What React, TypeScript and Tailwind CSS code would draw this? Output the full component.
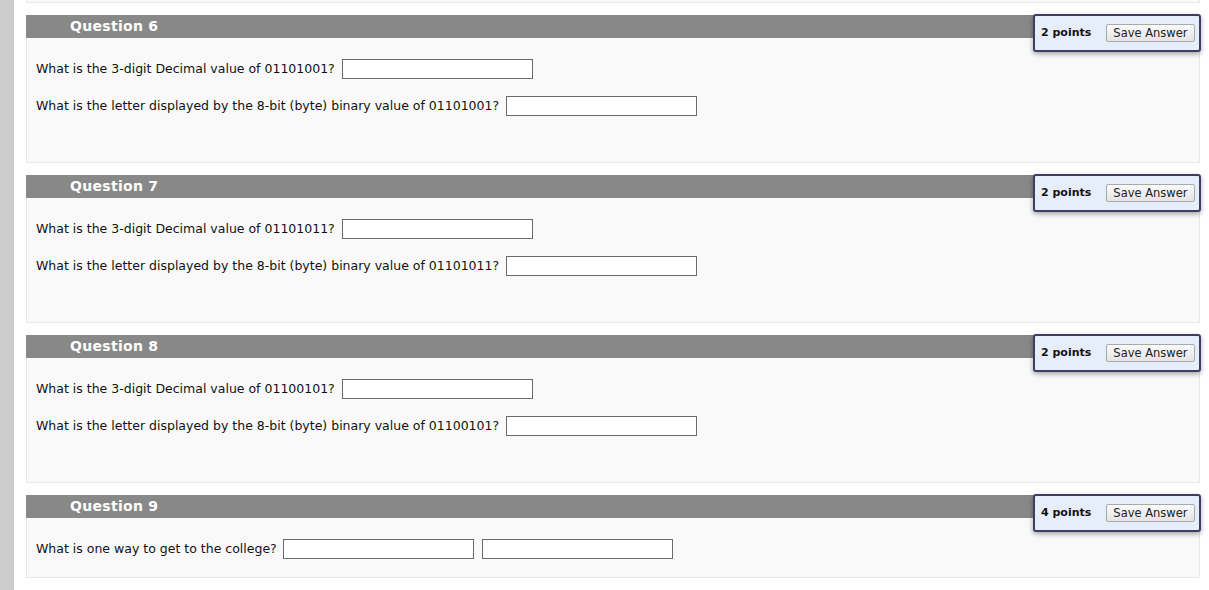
const QUESTIONS = [
    {
        num: 6,
        points: 2,
        rows: [
            "What is the 3-digit Decimal value of 01101001?",
            "What is the letter displayed by the 8-bit (byte) binary value of 01101001?",
        ],
    },
    {
        num: 7,
        points: 2,
        rows: [
            "What is the 3-digit Decimal value of 01101011?",
            "What is the letter displayed by the 8-bit (byte) binary value of 01101011?",
        ],
    },
    {
        num: 8,
        points: 2,
        rows: [
            "What is the 3-digit Decimal value of 01100101?",
            "What is the letter displayed by the 8-bit (byte) binary value of 01100101?",
        ],
    },
];

function PointsBox({ points }: { points: number }) {
    return (
        <div className="absolute right-[-1px] top-[-1px] flex h-[38px] w-[168px] items-center whitespace-nowrap rounded-[3px] border-2 border-[#3d3d66] bg-[#e6eefc] pl-[6px] shadow-[0_2px_5px_rgba(0,0,0,0.35)]">
            <span className="text-[11px] font-bold text-[#111]">{points} points</span>
            <button className="ml-[15px] h-[18px] rounded-[2px] border border-[#aaaaaa] bg-gradient-to-b from-[#fbfbfb] to-[#e4e4e4] px-[6px] text-[11.5px] leading-[16px] text-[#222]">
                Save Answer
            </button>
        </div>
    );
}

function Field() {
    return <input className="h-[20px] w-[191px] shrink-0 border border-[#6b6b6b] bg-white" />;
}

function QuestionCard({
    num,
    points,
    bodyClass,
    children,
}: {
    num: number;
    points: number;
    bodyClass: string;
    children: React.ReactNode;
}) {
    return (
        <div className="relative">
            <div className="h-[23px] bg-[#888888] pl-[44px] text-[14px] font-bold leading-[23px] tracking-[0.3px] text-white">
                Question {num}
            </div>
            <div className={`border-x border-b border-[#e8e8e8] bg-[#f9f9f9] pl-[9px] ${bodyClass}`}>{children}</div>
            <PointsBox points={points} />
        </div>
    );
}

export default function App() {
    return (
        <div
            className="flex h-[590px] w-[1209px] overflow-hidden bg-white text-[12.5px] text-[#111]"
            style={{ fontFamily: '"DejaVu Sans", Verdana, sans-serif' }}
        >
            <div className="w-[14px] shrink-0 bg-[#cccccc]" />
            <div className="ml-[12px] mr-[9px] flex flex-1 flex-col gap-[12px]">
                {/* tail of the previous card */}
                <div className="h-[3px] border-x border-b border-[#e8e8e8] bg-[#f9f9f9]" />

                {QUESTIONS.map((q) => (
                    <QuestionCard key={q.num} num={q.num} points={q.points} bodyClass="h-[125px] pt-[21px]">
                        <div className="flex flex-col gap-[17px]">
                            {q.rows.map((r) => (
                                <div key={r} className="flex items-center gap-[7px]">
                                    <span>{r}</span>
                                    <Field />
                                </div>
                            ))}
                        </div>
                    </QuestionCard>
                ))}

                <QuestionCard num={9} points={4} bodyClass="h-[60px] pt-[21px]">
                    <div className="flex items-center">
                        <span className="mr-[6px]">What is one way to get to the college?</span>
                        <Field />
                        <span className="w-[8px]" />
                        <Field />
                    </div>
                </QuestionCard>
            </div>
        </div>
    );
}
